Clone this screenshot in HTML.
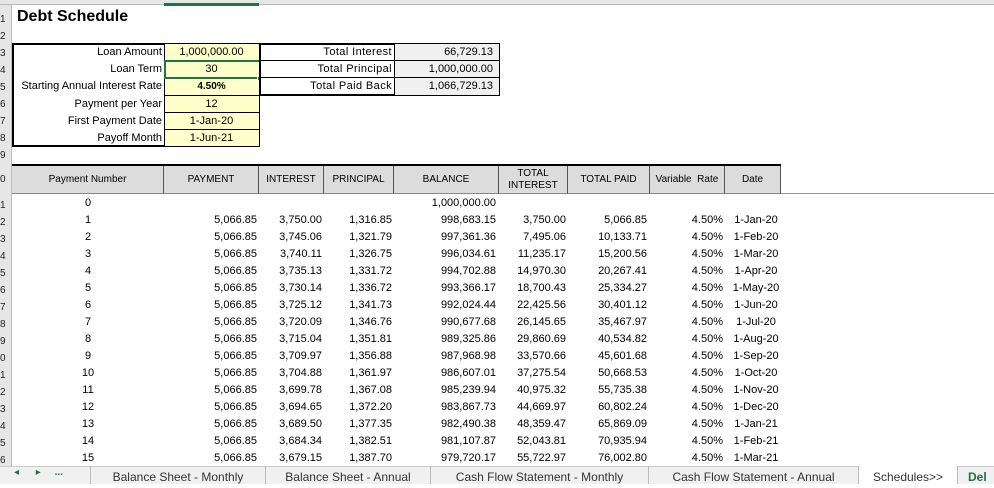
<!DOCTYPE html><html><head><style>
body{margin:0;width:994px;height:484px;overflow:hidden;background:#fff;font-family:"Liberation Sans",Arial,sans-serif;font-size:11px;color:#000;position:relative}
div{position:absolute;box-sizing:border-box;white-space:nowrap}
.r{text-align:right}.c{text-align:center}
.rh{left:0;width:12px;background:#e6e6e6;border-right:1px solid #bbb;font-size:10px;text-align:right;color:#222;overflow:hidden}
.y{background:#ffffcc}
.g{background:#f0f0f0}
.hd{background:#dcdcdc;font-size:10px;display:flex;align-items:center;justify-content:center;text-align:center;line-height:12px;border-right:1px solid #555;border-bottom:1px solid #888}
.tab{top:466px;height:18px;line-height:22px;font-size:12px;color:#333;border-left:1px solid #bbb;text-align:center}
</style></head><body>
<div style="left:0;top:0;width:994px;height:5px;background:#e6e6e6;border-bottom:1px solid #bbb"></div>
<div style="left:164px;top:3px;width:95px;height:3px;background:#217346"></div>
<div class="rh" style="top:5px;height:461px"></div>
<div style="left:17px;top:8px;font-size:16px;font-weight:bold">Debt Schedule</div>

<div style="left:12px;top:43px;width:248px;height:104px;border:2px solid #000"></div>
<div class="y" style="left:164px;top:44px;width:95px;height:102px;border-left:1px solid #000"></div>
<div style="left:164px;top:60px;width:95px;height:1px;background:#000"></div>
<div style="left:164px;top:77px;width:95px;height:1px;background:#000"></div>
<div style="left:164px;top:95px;width:95px;height:1px;background:#000"></div>
<div style="left:164px;top:112px;width:95px;height:1px;background:#000"></div>
<div style="left:164px;top:129px;width:95px;height:1px;background:#000"></div>
<div class="r" style="left:14px;width:148px;top:46px">Loan Amount</div>
<div class="r" style="left:14px;width:148px;top:63px">Loan Term</div>
<div class="r" style="left:14px;width:148px;top:80px">Starting Annual Interest Rate</div>
<div class="r" style="left:14px;width:148px;top:98px">Payment per Year</div>
<div class="r" style="left:14px;width:148px;top:115px">First Payment Date</div>
<div class="r" style="left:14px;width:148px;top:132px">Payoff Month</div>
<div class="c" style="left:164px;width:95px;top:46px">1,000,000.00</div>
<div class="c" style="left:164px;width:95px;top:63px">30</div>
<div class="c" style="left:164px;width:95px;top:81px;font-weight:bold;font-size:10px">4.50%</div>
<div class="c" style="left:164px;width:95px;top:98px">12</div>
<div class="c" style="left:164px;width:95px;top:115px">1-Jan-20</div>
<div class="c" style="left:164px;width:95px;top:132px">1-Jun-21</div>
<div style="left:164px;top:60px;width:97px;height:19px;border:2px solid #217346"></div>
<div style="left:257px;top:76px;width:5px;height:5px;background:#217346;border:1px solid #fff"></div>

<div style="left:259px;top:43px;width:241px;height:53px;border:2px solid #000"></div>
<div class="g" style="left:394px;top:44px;width:105px;height:51px;border-left:1px solid #000"></div>
<div style="left:260px;top:60px;width:239px;height:1px;background:#000"></div>
<div style="left:260px;top:77px;width:239px;height:1px;background:#000"></div>
<div class="r" style="left:262px;width:130px;top:46px;letter-spacing:.4px">Total Interest</div>
<div class="r" style="left:262px;width:130px;top:63px;letter-spacing:.4px">Total Principal</div>
<div class="r" style="left:262px;width:130px;top:80px;letter-spacing:.4px">Total Paid Back</div>
<div class="r" style="left:394px;width:99px;top:46px">66,729.13</div>
<div class="r" style="left:394px;width:99px;top:63px">1,000,000.00</div>
<div class="r" style="left:394px;width:99px;top:80px">1,066,729.13</div>

<div style="left:12px;top:164px;width:769px;height:30px;border-top:2px solid #000"></div>
<div style="left:780px;top:193px;width:214px;height:1px;background:#999"></div>
<div class="hd" style="left:12px;top:166px;width:152px;height:28px">Payment Number</div>
<div class="hd" style="left:164px;top:166px;width:95px;height:28px">PAYMENT</div>
<div class="hd" style="left:259px;top:166px;width:65px;height:28px">INTEREST</div>
<div class="hd" style="left:324px;top:166px;width:70px;height:28px">PRINCIPAL</div>
<div class="hd" style="left:394px;top:166px;width:105px;height:28px">BALANCE</div>
<div class="hd" style="left:499px;top:166px;width:69px;height:28px">TOTAL<br>INTEREST</div>
<div class="hd" style="left:568px;top:166px;width:82px;height:28px">TOTAL PAID</div>
<div class="hd" style="left:650px;top:166px;width:75px;height:28px">Variable&nbsp; Rate</div>
<div class="hd" style="left:725px;top:166px;width:56px;height:28px">Date</div>

<div id="rows"></div>
<div class="c" style="left:12px;width:152px;top:197px">0</div>
<div class="r" style="left:394px;width:102px;top:197px">1,000,000.00</div>

<div style="left:0;top:11px;width:12px;font-size:10px;line-height:17px;color:#222">1<br>2</div>
<div style="left:0;top:45px;width:12px;font-size:10px;line-height:17px;color:#222">3<br>4<br>5<br>6<br>7<br>8<br>9</div>
<div style="left:0;top:174px;width:12px;font-size:10px;color:#222">0</div>
<div style="left:0;top:197px;width:12px;font-size:10px;line-height:17px;color:#222;overflow:hidden">1<br>2<br>3<br>4<br>5<br>6<br>7<br>8<br>9<br>0<br>1<br>2<br>3<br>4<br>5<br>6</div>

<div style="left:0;top:466px;width:994px;height:18px;background:#f0f0f0;border-top:1px solid #ccc"></div>
<div style="left:14px;top:467px;color:#217346;font-size:10px">◂&nbsp;&nbsp;&nbsp;&nbsp;&nbsp;&nbsp;▸&nbsp;&nbsp;&nbsp;&nbsp;&nbsp;<b>...</b></div>
<div class="tab" style="left:90px;width:175px">Balance Sheet - Monthly</div>
<div class="tab" style="left:265px;width:165px">Balance Sheet - Annual</div>
<div class="tab" style="left:430px;width:218px">Cash Flow Statement - Monthly</div>
<div class="tab" style="left:648px;width:210px">Cash Flow Statement - Annual</div>
<div class="tab" style="left:858px;width:100px;background:#fff;border-right:1px solid #bbb">Schedules&gt;&gt;</div>
<div class="tab" style="left:968px;width:30px;border:none;color:#217346;font-weight:bold;text-align:left">Del</div>

<script>
var d=[
["1","3,750.00","1,316.85","998,683.15","3,750.00","5,066.85","1-Jan-20"],
["2","3,745.06","1,321.79","997,361.36","7,495.06","10,133.71","1-Feb-20"],
["3","3,740.11","1,326.75","996,034.61","11,235.17","15,200.56","1-Mar-20"],
["4","3,735.13","1,331.72","994,702.88","14,970.30","20,267.41","1-Apr-20"],
["5","3,730.14","1,336.72","993,366.17","18,700.43","25,334.27","1-May-20"],
["6","3,725.12","1,341.73","992,024.44","22,425.56","30,401.12","1-Jun-20"],
["7","3,720.09","1,346.76","990,677.68","26,145.65","35,467.97","1-Jul-20"],
["8","3,715.04","1,351.81","989,325.86","29,860.69","40,534.82","1-Aug-20"],
["9","3,709.97","1,356.88","987,968.98","33,570.66","45,601.68","1-Sep-20"],
["10","3,704.88","1,361.97","986,607.01","37,275.54","50,668.53","1-Oct-20"],
["11","3,699.78","1,367.08","985,239.94","40,975.32","55,735.38","1-Nov-20"],
["12","3,694.65","1,372.20","983,867.73","44,669.97","60,802.24","1-Dec-20"],
["13","3,689.50","1,377.35","982,490.38","48,359.47","65,869.09","1-Jan-21"],
["14","3,684.34","1,382.51","981,107.87","52,043.81","70,935.94","1-Feb-21"],
["15","3,679.15","1,387.70","979,720.17","55,722.97","76,002.80","1-Mar-21"]];
var h="";
d.forEach(function(r,i){var t=214+i*17;
h+='<div class="c" style="left:12px;width:152px;top:'+t+'px">'+r[0]+'</div>'+
'<div class="r" style="left:164px;width:93px;top:'+t+'px">5,066.85</div>'+
'<div class="r" style="left:259px;width:63px;top:'+t+'px">'+r[1]+'</div>'+
'<div class="r" style="left:324px;width:68px;top:'+t+'px">'+r[2]+'</div>'+
'<div class="r" style="left:394px;width:102px;top:'+t+'px">'+r[3]+'</div>'+
'<div class="r" style="left:499px;width:67px;top:'+t+'px">'+r[4]+'</div>'+
'<div class="r" style="left:568px;width:79px;top:'+t+'px">'+r[5]+'</div>'+
'<div class="r" style="left:650px;width:73px;top:'+t+'px">4.50%</div>'+
'<div class="c" style="left:725px;width:62px;top:'+t+'px">'+r[6]+'</div>';});
document.getElementById("rows").outerHTML=h;
</script>
</body></html>
